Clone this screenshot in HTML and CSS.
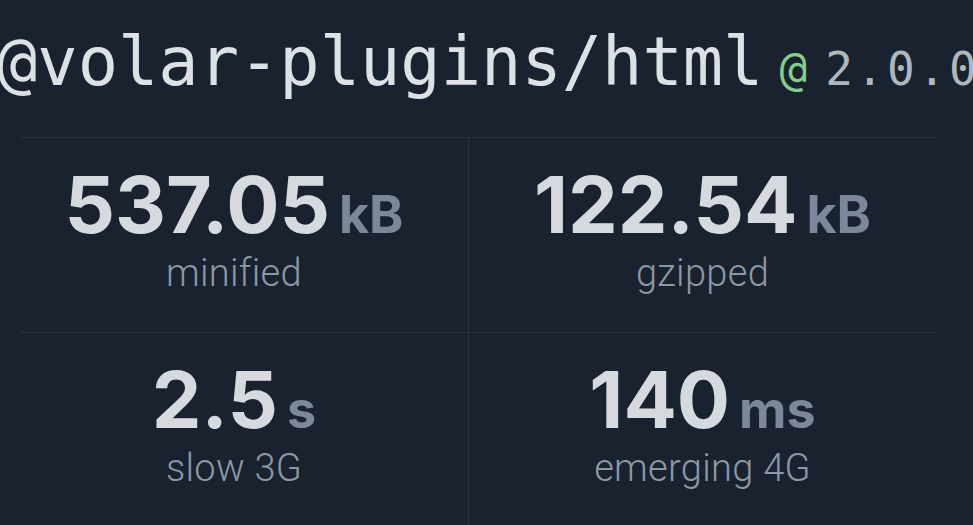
FILE: index.html
```html
<!DOCTYPE html>
<html lang="en">
<head>
<meta charset="utf-8">
<title>@volar-plugins/html</title>
<link rel="stylesheet" href="styles.css">
</head>
<body>
<div class="page">
  <h1 class="pkg">
    <span class="pkg-name">@volar-plugins/html</span><span class="pkg-at">@</span><span class="pkg-version">2.0.0</span>
  </h1>
  <div class="stats">
    <div class="stat stat-left">
      <div class="stat-value"><span class="num">537.05</span><span class="unit">kB</span></div>
      <div class="stat-label">minified</div>
    </div>
    <div class="stat stat-right">
      <div class="stat-value"><span class="num">122.54</span><span class="unit">kB</span></div>
      <div class="stat-label">gzipped</div>
    </div>
    <div class="stat stat-left">
      <div class="stat-value"><span class="num">2.5</span><span class="unit">s</span></div>
      <div class="stat-label">slow 3G</div>
    </div>
    <div class="stat stat-right">
      <div class="stat-value"><span class="num">140</span><span class="unit">ms</span></div>
      <div class="stat-label">emerging 4G</div>
    </div>
  </div>
</div>
</body>
</html>
```

FILE: styles.css
```css
html, body {
  margin: 0;
  padding: 0;
  background: #19222e;
  height: 100%;
  overflow: hidden;
}

.page {
  width: 973px;
  height: 525px;
  overflow: hidden;
}

.pkg {
  margin: 0 0 0 -3px;
  padding-top: 22px;
  height: 137px;
  box-sizing: border-box;
  white-space: nowrap;
  font-family: "DejaVu Sans Mono", "Liberation Mono", monospace;
  font-weight: 400;
  display: flex;
  align-items: baseline;
}

.pkg-name {
  font-size: 67px;
  letter-spacing: 0;
  color: #dde0e4;
  line-height: 80px;
}

.pkg-at {
  font-size: 46px;
  color: #82cf86;
  margin-left: 16px;
}

.pkg-version {
  font-size: 46px;
  letter-spacing: 3.3px;
  color: #b0b6be;
  margin-left: 18px;
}

.stats {
  display: grid;
  grid-template-columns: 448px 468px;
  margin-left: 20px;
  width: 916px;
}

.stat {
  height: 195px;
  box-sizing: border-box;
  border-top: 1px solid #2a3441;
  display: flex;
  flex-direction: column;
  align-items: center;
  padding-top: 26px;
}

.stat-left {
  padding-right: 20px;
}

.stat-right {
  border-left: 1px solid #2a3441;
}

.stat-value {
  display: flex;
  align-items: baseline;
  gap: 9px;
  font-family: "Inter", "Liberation Sans", sans-serif;
  font-weight: 700;
  line-height: 80px;
}

.num {
  font-size: 79px;
  color: #d6d9de;
  letter-spacing: 0;
}

.unit {
  font-size: 52px;
  color: #7c889a;
}

.stat-label {
  font-family: "Roboto", "Inter", sans-serif;
  font-weight: 300;
  font-size: 38px;
  letter-spacing: 0.3px;
  color: #8d98a5;
  line-height: 44px;
  margin-top: -4px;
}
```
